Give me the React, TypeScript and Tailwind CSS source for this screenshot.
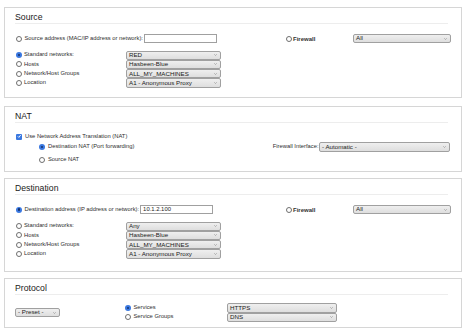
import React from "react";

const FONT = { fontFamily: '"Liberation Sans", Arial, sans-serif' };

function Radio({ checked = false }: { checked?: boolean }) {
  return checked ? (
    <span className="flex h-[6px] w-[6px] shrink-0 items-center justify-center rounded-full bg-[#3a78e0]">
      <span className="h-[2.5px] w-[2.5px] rounded-full bg-[#16306a]" />
    </span>
  ) : (
    <span className="h-[6px] w-[6px] shrink-0 rounded-full border-[0.7px] border-[#6f6f6f] bg-white" />
  );
}

function Checkbox() {
  return (
    <span className="flex h-[6px] w-[6px] shrink-0 items-center justify-center rounded-[1px] bg-[#3a78e0]">
      <svg width="4.5" height="4.5" viewBox="0 0 8 8">
        <path d="M1.5 4.2 L3.3 6 L6.6 1.8" fill="none" stroke="#fff" strokeWidth="1.6" />
      </svg>
    </span>
  );
}

function Select({ value, className = "" }: { value: string; className?: string }) {
  return (
    <div
      className={`flex shrink-0 items-center justify-between rounded-[2px] border-[0.7px] border-[#a0a0a0] bg-gradient-to-b from-[#efefef] to-[#dedede] pl-[2px] pr-[3px] text-[6.2px] leading-none text-[#1a1a1a] ${className}`}
    >
      <span className="whitespace-nowrap">{value}</span>
      <svg width="3" height="2" viewBox="0 0 6 4">
        <path d="M0.5 0.5 L3 3 L5.5 0.5" fill="none" stroke="#777" strokeWidth="1" />
      </svg>
    </div>
  );
}

function Panel({
  title,
  className,
  children,
}: {
  title: string;
  className: string;
  children: React.ReactNode;
}) {
  return (
    <div className={`w-[458px] border border-[#d6d6d6] bg-white ${className}`}>
      <div className="ml-[10px] mr-[13px] h-[16px] border-b border-[#ededed] pt-[4px] text-[8.7px] leading-[11px] text-[#1a1a1a]">
        {title}
      </div>
      {children}
    </div>
  );
}

function Label({ children, className = "" }: { children: React.ReactNode; className?: string }) {
  return (
    <span className={`whitespace-nowrap text-[5.8px] leading-none text-[#2e2e2e] ${className}`}>
      {children}
    </span>
  );
}

function AddressBlock({
  addressLabel,
  addressValue,
  selected,
  values,
}: {
  addressLabel: string;
  addressValue: string;
  selected: number;
  values: string[];
}) {
  const rows = ["Standard networks:", "Hosts", "Network/Host Groups", "Location"];
  return (
    <>
      <div className="mt-[9.5px] flex h-[10px] items-center pl-[11px]">
        <div className="flex w-[270px] items-center">
          <Radio checked={selected === -1} />
          <Label className="ml-[2.5px]">{addressLabel}</Label>
          <div className="ml-[1px] flex h-[8.5px] w-[73px] items-center border-[0.7px] border-[#a0a0a0] bg-white pl-[2px] text-[5.9px] leading-none text-[#222]">
            {addressValue}
          </div>
        </div>
        <Radio />
        <span className="ml-[1px] w-[60px] text-[6px] font-bold leading-none text-[#333]">Firewall</span>
        <Select value="All" className="h-[9.5px] w-[98px]" />
      </div>
      <div className="mt-[7px] flex flex-col pl-[11px]">
        {rows.map((r, i) => (
          <div key={r} className="flex h-[9.33px] items-center">
            <div className="flex w-[110px] items-center">
              <Radio checked={selected === i} />
              <Label className="ml-[2px]">{r}</Label>
            </div>
            <Select value={values[i]} className="h-[9.33px] w-[95px]" />
          </div>
        ))}
      </div>
    </>
  );
}

export default function App() {
  return (
    <div className="h-[333px] w-[474px] overflow-hidden bg-white pl-[4px] pt-[7px]" style={FONT}>
      <Panel title="Source" className="h-[91px]">
        <AddressBlock
          addressLabel="Source address (MAC/IP address or network):"
          addressValue=""
          selected={0}
          values={["RED", "Hasbeen-Blue", "ALL_MY_MACHINES", "A1 - Anonymous Proxy"]}
        />
      </Panel>

      <Panel title="NAT" className="mt-[8px] h-[66px]">
        <div className="mt-[9.5px] flex h-[8px] items-center pl-[11px]">
          <Checkbox />
          <Label className="ml-[3px]">Use Network Address Translation (NAT)</Label>
        </div>
        <div className="mt-[1.5px] flex h-[10px] items-center justify-between pl-[34px] pr-[11px]">
          <div className="flex items-center">
            <Radio checked />
            <Label className="ml-[3px]">Destination NAT (Port forwarding)</Label>
          </div>
          <div className="flex items-center">
            <Label className="mr-[0.5px]">Firewall Interface:</Label>
            <Select value="- Automatic -" className="h-[10px] w-[131px]" />
          </div>
        </div>
        <div className="mt-[4px] flex h-[8px] items-center pl-[34px]">
          <Radio />
          <Label className="ml-[3px]">Source NAT</Label>
        </div>
      </Panel>

      <Panel title="Destination" className="mt-[6px] h-[94px]">
        <AddressBlock
          addressLabel="Destination address (IP address or network):"
          addressValue="10.1.2.100"
          selected={-1}
          values={["Any", "Hasbeen-Blue", "ALL_MY_MACHINES", "A1 - Anonymous Proxy"]}
        />
      </Panel>

      <Panel title="Protocol" className="mt-[6px] h-[50px]">
        <div className="mt-[8px] flex h-[19px] items-center pl-[10px]">
          <Select value="- Preset -" className="h-[9.5px] w-[45px]" />
          <div className="ml-[65px] flex w-[102px] flex-col">
            <div className="flex h-[9.5px] items-center">
              <Radio checked />
              <Label className="ml-[2.5px]">Services</Label>
            </div>
            <div className="flex h-[9.5px] items-center">
              <Radio />
              <Label className="ml-[2.5px]">Service Groups</Label>
            </div>
          </div>
          <div className="flex flex-col">
            <Select value="HTTPS" className="h-[9.5px] w-[110px]" />
            <Select value="DNS" className="h-[9.5px] w-[110px]" />
          </div>
        </div>
      </Panel>
    </div>
  );
}
